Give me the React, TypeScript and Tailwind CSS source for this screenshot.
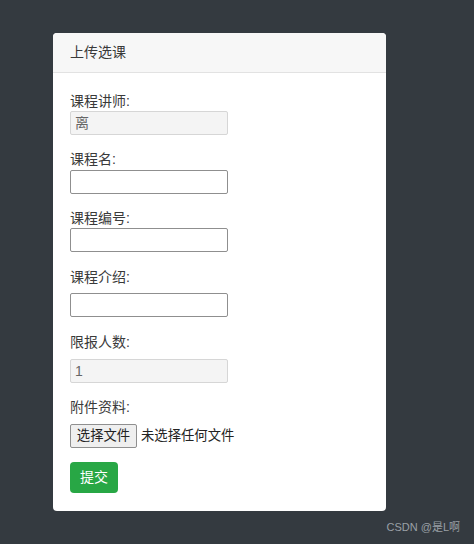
import React from "react";

const font = { fontFamily: '"Liberation Sans", "Noto Sans CJK SC", sans-serif' };

function Field({
    label,
    value,
    disabled,
    labelTop,
    inputTop,
}: {
    label: string;
    value?: string;
    disabled?: boolean;
    labelTop: string;
    inputTop: string;
}) {
    return (
        <div className={labelTop}>
            <div className="h-[18px] text-[14px] leading-[18px] text-[#3a3a3a]">{label}</div>
            <div
                className={`${inputTop} flex h-[24px] w-[158px] items-center rounded-[2px] border px-[4px] text-[14px] text-[#666] ${
                    disabled ? "border-[#d6d6d6] bg-[#f4f4f4]" : "border-[#8f8f8f] bg-white"
                }`}
            >
                {value}
            </div>
        </div>
    );
}

export default function App() {
    return (
        <div className="relative h-[544px] w-[474px] overflow-hidden bg-[#343a40]" style={font}>
            <div className="ml-[53px] mt-[33px] w-[333px] overflow-hidden rounded-[4px] bg-white">
                <div className="flex h-[40px] items-center border-b border-[#e2e2e2] bg-[#f7f7f7] px-[17px] text-[14px] text-[#3a3a3a]">
                    上传选课
                </div>
                <div className="px-[17px] pb-[18px] pt-[19px]">
                    <Field label="课程讲师:" value="离" disabled labelTop="mt-0" inputTop="mt-[1px]" />
                    <Field label="课程名:" labelTop="mt-[15px]" inputTop="mt-[2px]" />
                    <Field label="课程编号:" labelTop="mt-[15px]" inputTop="mt-[1px]" />
                    <Field label="课程介绍:" labelTop="mt-[16px]" inputTop="mt-[7px]" />
                    <Field label="限报人数:" value="1" disabled labelTop="mt-[16px]" inputTop="mt-[8px]" />
                    <div className="mt-[15px]">
                        <div className="h-[18px] text-[14px] leading-[18px] text-[#3a3a3a]">附件资料:</div>
                        <div className="mt-[8px] flex items-center gap-[4px]">
                            <button
                                type="button"
                                className="flex h-[24px] w-[67px] items-center justify-center rounded-[2px] border border-[#8f8f8f] bg-[#efefef] text-[13.333px] text-[#222]"
                            >
                                选择文件
                            </button>
                            <span className="text-[13.333px] text-[#222]">未选择任何文件</span>
                        </div>
                    </div>
                    <button
                        type="button"
                        className="mt-[14px] flex h-[31px] w-[48px] items-center justify-center rounded-[4px] bg-[#28a745] text-[14px] text-white"
                    >
                        提交
                    </button>
                </div>
            </div>
            <div className="absolute bottom-[9px] right-[14px] text-[11px] text-[#9aa0a6]">CSDN @是L啊</div>
        </div>
    );
}
